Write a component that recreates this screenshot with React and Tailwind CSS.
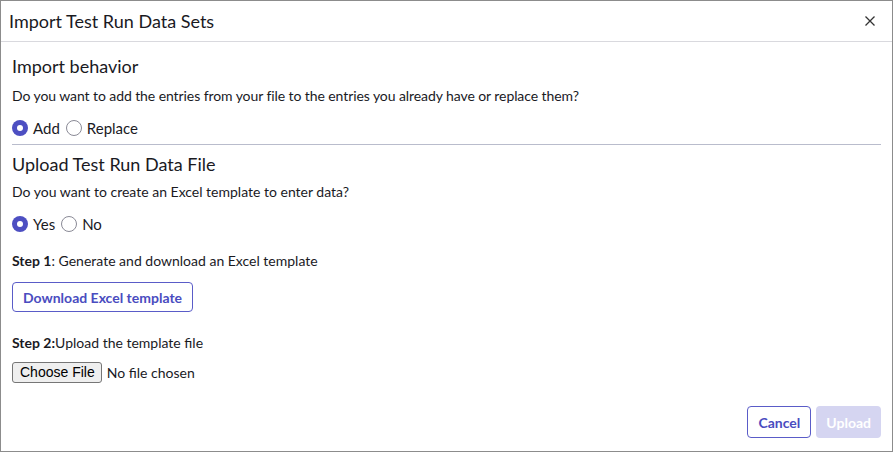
import React from "react";

function Radio({ checked, label }) {
  return (
    <label className="flex items-center gap-[5px]">
      {checked ? (
        <span className="w-[16px] h-[16px] rounded-full bg-[#4d4fc2] flex items-center justify-center">
          <span className="w-[6px] h-[6px] rounded-full bg-white" />
        </span>
      ) : (
        <span className="w-[16px] h-[16px] rounded-full border border-[#8a8a96] bg-white" />
      )}
      <span>{label}</span>
    </label>
  );
}

export default function App() {
  return (
    <div
      className="w-[893px] h-[452px] border border-[#8c8c8c] bg-white text-[#1a1a1f] flex flex-col"
      style={{ fontFamily: "Lato, 'Open Sans', sans-serif" }}
    >
      <div className="h-[41px] border-b border-[#d9d9de] flex items-center justify-between pl-[8px] pr-[17px]">
        <h1 className="text-[18px] leading-[20px]">Import Test Run Data Sets</h1>
        <svg width="10" height="10" viewBox="0 0 10 10" className="text-[#333]">
          <path d="M0.5 0.5L9.5 9.5M9.5 0.5L0.5 9.5" stroke="currentColor" strokeWidth="1.3" />
        </svg>
      </div>
      <div className="flex-1 px-[11px] flex flex-col">
        <h2 className="text-[18px] leading-[20px] mt-[14px]">Import behavior</h2>
        <p className="text-[14px] leading-[18px] mt-[11px] tracking-[-0.08px]">
          Do you want to add the entries from your file to the entries you already have or replace them?
        </p>
        <div className="flex items-center gap-[6px] text-[15px] leading-[16px] mt-[15px]">
          <Radio checked label="Add" />
          <Radio label="Replace" />
        </div>
        <div className="border-b border-[#b9bccc] mt-[8px]" />
        <h2 className="text-[18px] leading-[20px] mt-[9px]">Upload Test Run Data File</h2>
        <p className="text-[14px] leading-[18px] mt-[9px]">
          Do you want to create an Excel template to enter data?
        </p>
        <div className="flex items-center gap-[6px] text-[15px] leading-[16px] mt-[15px]">
          <Radio checked label="Yes" />
          <Radio label="No" />
        </div>
        <p className="text-[14px] leading-[18px] mt-[20px]">
          <span className="font-bold">Step 1</span>: Generate and download an Excel template
        </p>
        <div className="mt-[12px]">
          <button className="h-[30px] px-[10px] border border-[#5a5cc8] rounded-[4px] text-[14px] font-bold text-[#4a4cc0]">
            Download Excel template
          </button>
        </div>
        <p className="text-[14px] leading-[18px] mt-[22px]">
          <span className="font-bold">Step 2:</span>Upload the template file
        </p>
        <div className="flex items-center mt-[10px] text-[14px]">
          <span
            className="h-[21px] pl-[7px] pr-[6px] flex items-center border border-[#767676] rounded-[3px] bg-[#efefef] text-[14px] text-black"
            style={{ fontFamily: "'Liberation Sans', Arial, sans-serif" }}
          >
            Choose File
          </span>
          <span className="ml-[5px]">No file chosen</span>
        </div>
        <div className="flex-1" />
        <div className="flex justify-end gap-[5px] mb-[13px]">
          <button className="h-[32px] px-[10px] border border-[#5a5cc8] rounded-[4px] text-[14px] font-bold text-[#4a4cc0]">
            Cancel
          </button>
          <button className="h-[32px] px-[10px] rounded-[4px] bg-[#d5d5f1] text-[14px] font-bold text-white">
            Upload
          </button>
        </div>
      </div>
    </div>
  );
}
